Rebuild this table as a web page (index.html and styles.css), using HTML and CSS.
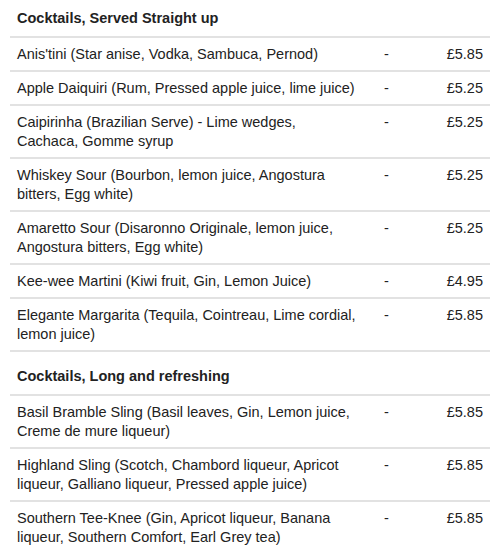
FILE: index.html
```html
<!DOCTYPE html>
<html>
<head>
<meta charset="utf-8">
<link rel="stylesheet" href="styles.css">
</head>
<body>
<div class="menu">
  <div class="section">
    <div class="heading">Cocktails, Served Straight up</div>
    <div class="row"><div class="desc">Anis'tini (Star anise, Vodka, Sambuca, Pernod)</div><div class="dash">-</div><div class="price">£5.85</div></div>
    <div class="row"><div class="desc">Apple Daiquiri (Rum, Pressed apple juice, lime juice)</div><div class="dash">-</div><div class="price">£5.25</div></div>
    <div class="row"><div class="desc">Caipirinha (Brazilian Serve) - Lime wedges, Cachaca, Gomme syrup</div><div class="dash">-</div><div class="price">£5.25</div></div>
    <div class="row"><div class="desc">Whiskey Sour (Bourbon, lemon juice, Angostura bitters, Egg white)</div><div class="dash">-</div><div class="price">£5.25</div></div>
    <div class="row"><div class="desc">Amaretto Sour (Disaronno Originale, lemon juice, Angostura bitters, Egg white)</div><div class="dash">-</div><div class="price">£5.25</div></div>
    <div class="row"><div class="desc">Kee-wee Martini (Kiwi fruit, Gin, Lemon Juice)</div><div class="dash">-</div><div class="price">£4.95</div></div>
    <div class="row"><div class="desc">Elegante Margarita (Tequila, Cointreau, Lime cordial, lemon juice)</div><div class="dash">-</div><div class="price">£5.85</div></div>
  </div>
  <div class="section">
    <div class="heading">Cocktails, Long and refreshing</div>
    <div class="row"><div class="desc">Basil Bramble Sling (Basil leaves, Gin, Lemon juice, Creme de mure liqueur)</div><div class="dash">-</div><div class="price">£5.85</div></div>
    <div class="row"><div class="desc">Highland Sling (Scotch, Chambord liqueur, Apricot liqueur, Galliano liqueur, Pressed apple juice)</div><div class="dash">-</div><div class="price">£5.85</div></div>
    <div class="row"><div class="desc">Southern Tee-Knee (Gin, Apricot liqueur, Banana liqueur, Southern Comfort, Earl Grey tea)</div><div class="dash">-</div><div class="price">£5.85</div></div>
  </div>
</div>
</body>
</html>
```

FILE: styles.css
```css
html, body {
  margin: 0;
  padding: 0;
  background: #fff;
}
body {
  font-family: "Liberation Sans", Arial, sans-serif;
  font-size: 14.5px;
  line-height: 19px;
  color: #222;
}
.menu {
  padding: 0 10px;
}
.heading {
  font-weight: bold;
  padding: 15px 7px 8px;
  border-bottom: 2px solid #e2e2e2;
}
.section:first-child .heading {
  padding-top: 9px;
}
.row {
  display: grid;
  grid-template-columns: 342px 1fr auto;
  column-gap: 25px;
  padding: 7px 7px 6px;
  border-bottom: 2px solid #e2e2e2;
}
.price {
  text-align: right;
}
```
